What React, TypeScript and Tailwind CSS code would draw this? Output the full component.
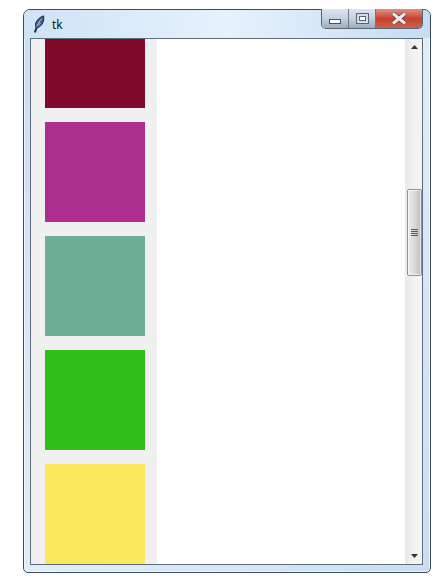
export default function App() {
  return (
    <div className="w-[443px] h-[583px] bg-white pt-[9px] pl-[23px] overflow-hidden">
      <div className="w-[408px] h-[564px] rounded-t-[7px] rounded-b-[5px] border border-[#3d4a58] bg-gradient-to-br from-[#c9def4] via-[#e0eefa] to-[#c9def4] flex flex-col shadow-[inset_0_0_0_1px_rgba(255,255,255,0.6)]">
        <div className="h-[28px] shrink-0 flex items-start pl-[9px] pr-[7px] rounded-t-[6px] bg-gradient-to-r from-[#cfe3f6] via-[#e6f2fc] to-[#c6dcf3]">
          <div className="mt-[5px] w-[12px] h-[18px] mr-[7px]">
            <svg width="12" height="18" viewBox="0 0 12 18">
              <path d="M1.5 17 C2.5 14 2.8 13 3 12 C1.4 9.5 3.5 3.5 10.5 0.8 C11.5 5 9.5 11.5 4.3 12.6 C3.8 14 3 15.8 2.4 17.4 Z" fill="#3f5f90" stroke="#16243f" strokeWidth="1" />
              <path d="M3.5 11.5 L8.5 3.5 M5 7.5 L7.8 8.5 M4.5 9.5 L6.8 10.2" stroke="#c4d2e6" strokeWidth="0.7" fill="none" />
            </svg>
          </div>
          <span className="mt-[6px] text-[12px] leading-[17px] text-black font-['Open_Sans','Noto_Sans',sans-serif]">tk</span>
          <div className="ml-auto h-[20px] flex rounded-b-[5px] border border-t-0 border-[#5b6673] overflow-hidden -mt-px">
            <div className="w-[27px] flex justify-center items-end pb-[4px] border-r border-[#6d7986] bg-gradient-to-b from-[#dce6f1] via-[#c3d0de] to-[#9eacbd]">
              <div className="w-[12px] h-[5px] border border-[#49525d] bg-white" />
            </div>
            <div className="w-[27px] flex justify-center items-center border-r border-[#6d7986] bg-gradient-to-b from-[#dce6f1] via-[#c3d0de] to-[#9eacbd]">
              <div className="w-[13px] h-[11px] border border-[#5a646f] bg-[#d3dee9] flex items-center justify-center">
                <div className="w-[7px] h-[5px] border border-[#5a646f] bg-white" />
              </div>
            </div>
            <div className="w-[46px] flex justify-center items-center bg-gradient-to-b from-[#dd9184] via-[#c8402f] to-[#c9604e]">
              <svg width="18" height="13" viewBox="0 0 18 13">
                <path d="M3 1.5 L15 11.5 M15 1.5 L3 11.5" stroke="#5c3f3c" strokeWidth="4.4" />
                <path d="M3 1.5 L15 11.5 M15 1.5 L3 11.5" stroke="#eee9e6" strokeWidth="3" />
              </svg>
            </div>
          </div>
        </div>
        <div className="ml-[6px] w-[393px] h-[527px] border border-[#5f6c79] flex bg-white overflow-hidden">
          <div className="w-[126px] h-full shrink-0 bg-[#f0f0f0] pl-[14px] flex flex-col gap-[14px] overflow-hidden">
            <div className="w-[100px] h-[69px] shrink-0 bg-[#7f0a2b]" />
            <div className="w-[100px] h-[100px] shrink-0 bg-[#ac2f90]" />
            <div className="w-[100px] h-[100px] shrink-0 bg-[#6fad94]" />
            <div className="w-[100px] h-[100px] shrink-0 bg-[#2fbf16]" />
            <div className="w-[100px] h-[100px] shrink-0 bg-[#fbe75c]" />
          </div>
          <div className="flex-1 bg-white" />
          <div className="w-[17px] h-full shrink-0 bg-gradient-to-r from-[#e9e9ea] via-[#f2f2f2] to-[#f4f4f4] flex flex-col items-start">
            <svg className="mt-[6px] ml-[6px]" width="7" height="4" viewBox="0 0 7 4"><path d="M3.5 0 L7 4 L0 4 Z" fill="#30343a" /></svg>
            <div className="mt-[140px] ml-[2px] w-[15px] h-[87px] rounded-[2px] border border-[#8f9296] bg-gradient-to-r from-[#ededf0] via-[#d9d9dd] to-[#bdbdc2] flex flex-col items-center justify-center gap-[1px] shadow-[inset_0_0_0_1px_rgba(255,255,255,0.6)]">
              <div className="w-[7px] h-px bg-[#55585c]" />
              <div className="w-[7px] h-px bg-[#55585c]" />
              <div className="w-[7px] h-px bg-[#55585c]" />
              <div className="w-[7px] h-px bg-[#55585c]" />
            </div>
            <svg className="mt-auto mb-[6px] ml-[6px]" width="7" height="4" viewBox="0 0 7 4"><path d="M0 0 L7 0 L3.5 4 Z" fill="#30343a" /></svg>
          </div>
        </div>
      </div>
    </div>
  );
}
